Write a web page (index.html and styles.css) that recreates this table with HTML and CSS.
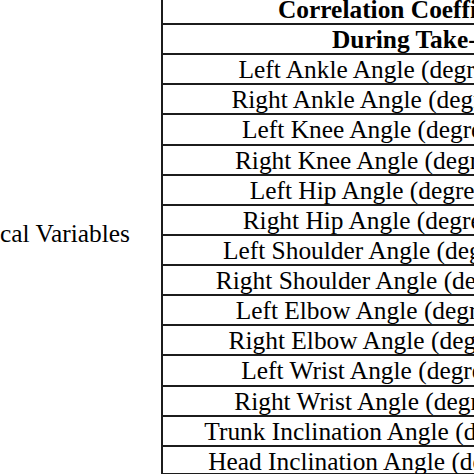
FILE: index.html
```html
<!DOCTYPE html>
<html>
<head>
<meta charset="utf-8">
<link rel="stylesheet" href="styles.css">
</head>
<body>
<div class="table">
  <div class="group">Biomechanical Variables</div>
  <div class="cell head head-1">Correlation Coefficients</div>
  <div class="cell head head-2">During Take-off Phase</div>
  <div class="cell">Left Ankle Angle (degrees)</div>
  <div class="cell">Right Ankle Angle (degrees)</div>
  <div class="cell">Left Knee Angle (degrees)</div>
  <div class="cell">Right Knee Angle (degrees)</div>
  <div class="cell">Left Hip Angle (degrees)</div>
  <div class="cell">Right Hip Angle (degrees)</div>
  <div class="cell">Left Shoulder Angle (degrees)</div>
  <div class="cell">Right Shoulder Angle (degrees)</div>
  <div class="cell">Left Elbow Angle (degrees)</div>
  <div class="cell">Right Elbow Angle (degrees)</div>
  <div class="cell">Left Wrist Angle (degrees)</div>
  <div class="cell">Right Wrist Angle (degrees)</div>
  <div class="cell">Trunk Inclination Angle (degrees)</div>
  <div class="cell last">Head Inclination Angle (degrees)</div>
</div>
</body>
</html>
```
FILE: styles.css
```css
html, body {
  margin: 0;
  padding: 0;
  background: #fff;
  overflow: hidden;
  width: 474px;
  height: 474px;
}

.table {
  display: grid;
  grid-template-columns: 316px 428px;
  grid-template-rows: 30px repeat(15, 30.14px);
  width: max-content;
  margin-left: -153px;
  margin-top: -7px;
  font-family: "Liberation Serif", "Times New Roman", serif;
  font-size: 25.4px;
  color: #000;
}

.group {
  grid-column: 1;
  grid-row: 1 / span 16;
  border-right: 2px solid #1c1c1c;
  display: flex;
  align-items: center;
  justify-content: flex-end;
  padding-right: 31px;
  white-space: nowrap;
}

.cell {
  grid-column: 2;
  box-sizing: border-box;
  border-top: 2px solid #1c1c1c;
  line-height: 28px;
  text-align: center;
  white-space: nowrap;
}

.cell.last {
  border-bottom: 2px solid #1c1c1c;
}

.head {
  font-weight: bold;
  text-align: left;
}

.head-1 {
  padding-left: 115px;
}

.head-2 {
  padding-left: 169px;
}
```
